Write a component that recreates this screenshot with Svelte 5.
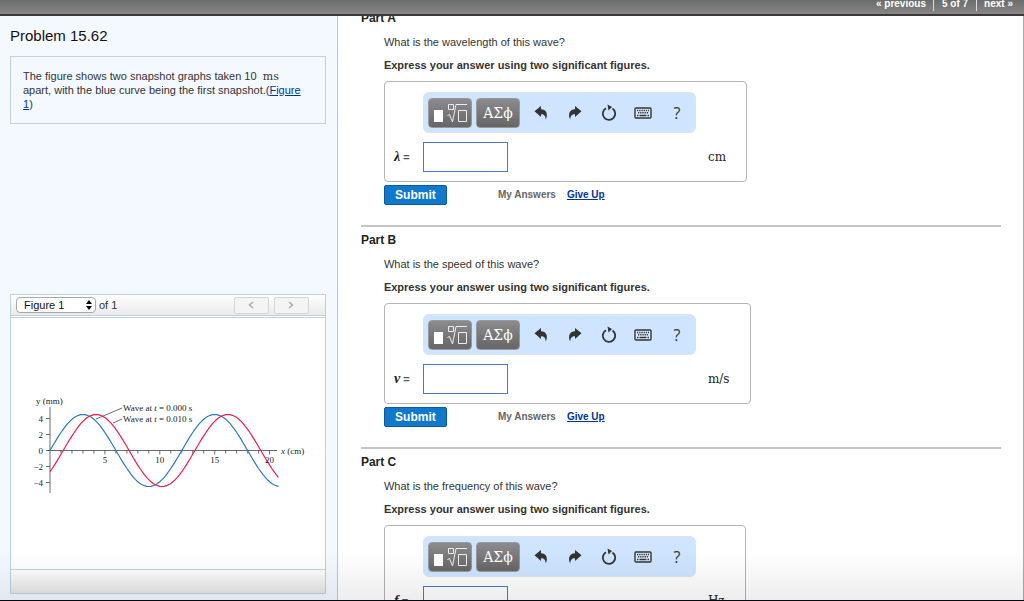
<script>
	const parts = [
		{ id: 'A', question: 'What is the wavelength of this wave?', symbol: 'λ', unit: 'cm' },
		{ id: 'B', question: 'What is the speed of this wave?', symbol: 'v', unit: 'm/s' },
		{ id: 'C', question: 'What is the frequency of this wave?', symbol: 'f', unit: 'Hz' }
	];

	let answers = $state({ A: '', B: '', C: '' });
	let figure = $state('Figure 1');

	// plot geometry: origin and pixels per unit
	const originX = 30;
	const originY = 66.5;
	const unitX = 10.98;
	const unitY = 8;
	const xTicks = Array.from({ length: 20 }, (_, i) => i + 1);
	const xLabels = [5, 10, 15, 20];
	const yTicks = [4, 2, 0, -2, -4];

	const wave = (shift) => {
		let d = '';
		for (let x = 0; x <= 20.8; x += 0.2) {
			const y = 4.5 * Math.sin((2 * Math.PI * (x - shift)) / 12);
			d += `${d ? 'L' : 'M'}${(originX + x * unitX).toFixed(1)} ${(originY - y * unitY).toFixed(1)}`;
		}
		return d;
	};
</script>

<div class="page">
	<header>
		<nav>
			<a href="#previous">« previous</a>
			<span>5 of 7</span>
			<a href="#next">next »</a>
		</nav>
	</header>

	<div class="columns">
		<aside>
			<h1>Problem 15.62</h1>
			<p class="intro">
				The figure shows two snapshot graphs taken 10&nbsp; <span class="math">ms</span> apart, with the blue curve being the
				first snapshot.(<a href="#figure">Figure 1</a>)
			</p>

			<section class="viewer" id="figure">
				<div class="viewer-bar">
					<div class="picker">
						<select bind:value={figure} aria-label="Figure">
							<option>Figure 1</option>
						</select>
						<svg width="6" height="10" viewBox="0 0 6 10"><path d="M3 0L6 4H0ZM3 10L0 6H6Z" /></svg>
					</div>
					<span class="count">of 1</span>
					<button class="step" disabled aria-label="Previous figure">
						<svg width="6" height="8" viewBox="0 0 6 8"><path d="M5 1L1.5 4L5 7" /></svg>
					</button>
					<button class="step" disabled aria-label="Next figure">
						<svg width="6" height="8" viewBox="0 0 6 8"><path d="M1 1L4.5 4L1 7" /></svg>
					</button>
				</div>
				<div class="viewer-body">
					<svg class="plot" viewBox="0 0 300 125" role="img" aria-label="Snapshot graphs of the wave">
						<g class="axis">
							<path d="M30 23V109M28 66.5H257" />
							{#each xTicks as x}
								<path d="M{originX + x * unitX} {originY}v{x % 5 ? 3 : 4}" />
							{/each}
							{#each yTicks as y}
								<path d="M26 {originY - y * unitY}h4" />
							{/each}
							<path d="M102 24L76 35M102 35L93 39" />
						</g>
						<path class="blue" d={wave(0)} />
						<path class="red" d={wave(1.2)} />
						<text x="16" y="20">y (mm)</text>
						<text x="261" y="70"><tspan class="it">x</tspan> (cm)</text>
						<text x="103" y="27">Wave at <tspan class="it">t</tspan> = 0.000 s</text>
						<text x="103" y="38">Wave at <tspan class="it">t</tspan> = 0.010 s</text>
						{#each xLabels as x}
							<text x={originX + x * unitX} y="79" text-anchor="middle">{x}</text>
						{/each}
						{#each yTicks as y}
							<text x="23" y={originY - y * unitY + 3} text-anchor="end">{y < 0 ? '−' + -y : y}</text>
						{/each}
					</svg>
				</div>
				<div class="viewer-foot"></div>
			</section>
		</aside>

		<main>
			<div class="parts">
				{#each parts as part}
					<section class="part">
						<h2>Part {part.id}</h2>
						<div class="content">
							<p>{part.question}</p>
							<p class="hint">Express your answer using two significant figures.</p>

							<div class="answer">
								<div class="toolbar">
									<button class="key" aria-label="Templates">
										<svg width="36" height="24" viewBox="0 0 36 24">
											<rect x="2" y="9" width="9" height="12" fill="#fff" />
											<path d="M16.5 3.500h5v5h-5zM15.500 14.500l2-1 3 7.500 3.500-17.500h11M26.500 9.500h8v11h-8z" fill="none" stroke="#eee" />
										</svg>
									</button>
									<button class="key">ΑΣϕ</button>
									<button class="tool" aria-label="Undo">
										<svg width="16" height="16" viewBox="0 0 16 16"><path d="M1.500 6.300L8 1V4.200C13 4.200 15.500 8.500 12.800 14.500C12.500 10.800 11.200 9.200 8 9.200V12Z" /></svg>
									</button>
									<button class="tool" aria-label="Redo">
										<svg width="16" height="16" viewBox="0 0 16 16"><path d="M14.500 6.300L8 1V4.200C3 4.200 .5 8.500 3.200 14.500C3.500 10.800 4.800 9.200 8 9.200V12Z" /></svg>
									</button>
									<button class="tool" aria-label="Reset">
										<svg width="16" height="18" viewBox="0 0 16 18">
											<path d="M5 4.200A6.200 6.200 0 1 0 11.500 4.500" fill="none" stroke="#333" stroke-width="1.800" />
											<path d="M6.500 .5L11 3L7.500 6.500Z" />
										</svg>
									</button>
									<button class="tool" aria-label="Keyboard">
										<svg width="18" height="12" viewBox="0 0 18 12">
											<rect x="1" y="1" width="16" height="10" rx="1" fill="#dcecff" stroke="#333" stroke-width="1.400" />
											<path d="M3 3.500h12M4 5.700h11" stroke="#333" stroke-width="1.400" stroke-dasharray="1.300 .9" />
											<path d="M3 8.500h1.500M5.500 8.500h7M13.500 8.500h1.500" stroke="#333" stroke-width="1.400" />
										</svg>
									</button>
									<button class="tool">?</button>
								</div>
								<label for="answer-{part.id}"><span class="symbol">{part.symbol}</span> =</label>
								<input id="answer-{part.id}" type="text" bind:value={answers[part.id]} />
								<span class="unit">{part.unit}</span>
							</div>

							<div class="actions">
								<button class="submit">Submit</button>
								<span class="my-answers">My Answers</span>
								<a href="#give-up">Give Up</a>
							</div>
						</div>
					</section>
				{/each}
			</div>
		</main>
	</div>
</div>

<style>
	:global(body) {
		margin: 0;
		background: #fff;
	}

	.page {
		position: relative;
		display: flex;
		flex-direction: column;
		box-sizing: border-box;
		height: 100vh;
		overflow: hidden;
		border-bottom: 1px solid #080812;
		font-family: "Liberation Sans", Arial, sans-serif;
		font-size: 11px;
		line-height: 14px;
		color: #333;
	}

	/* soft shade above the bottom edge of the window */
	.page::after {
		content: "";
		position: absolute;
		right: 0;
		bottom: 0;
		left: 0;
		height: 50px;
		background: linear-gradient(rgba(0, 0, 20, 0), rgba(0, 0, 20, 0.07));
		pointer-events: none;
	}

	h1, h2, p {
		margin: 0;
	}

	a {
		color: #003399;
	}

	button {
		padding: 0;
		font-family: inherit;
	}

	header {
		flex: none;
		box-sizing: border-box;
		height: 16px;
		overflow: hidden;
		border-bottom: 2px solid #3d3838;
		background: linear-gradient(#6b6d6b, #868686);
	}

	nav {
		display: flex;
		justify-content: flex-end;
		margin-top: -3px;
		padding-right: 11px;
		font-size: 10px;
		font-weight: bold;
		color: #fff;
	}

	nav a {
		color: #fff;
		text-decoration: none;
	}

	nav span {
		margin: 0 7px;
		padding: 0 8px;
		border-right: 1px solid #ddd;
		border-left: 1px solid #ddd;
	}

	.columns {
		display: flex;
		flex: 1;
		min-height: 0;
	}

	aside {
		display: flex;
		flex: 0 0 33%;
		flex-direction: column;
		box-sizing: border-box;
		padding: 11px 11px 6px 10px;
		border-right: 1px solid #b8c8dc;
		background: #f4f9ff;
	}

	h1 {
		font-size: 15px;
		font-weight: normal;
		line-height: 18px;
		color: #111;
	}

	.intro {
		margin-top: 11px;
		padding: 12px 18px 12px 12px;
		border: 1px solid #bdd0e4;
	}

	.math {
		font-family: "DejaVu Serif", serif;
		line-height: 1;
	}

	.viewer {
		margin-top: auto;
		border: 1px solid #bdd0e0;
		background: #fff;
	}

	.viewer-bar {
		display: flex;
		align-items: center;
		height: 20px;
		padding-right: 16px;
		padding-left: 5px;
		border-bottom: 1px solid #bdd0e0;
		background: linear-gradient(#fff, #eaeaea);
	}

	.picker {
		position: relative;
		display: flex;
	}

	.picker svg {
		position: absolute;
		top: 3px;
		right: 4px;
		pointer-events: none;
	}

	select {
		width: 80px;
		height: 16px;
		padding: 0 7px;
		appearance: none;
		border: 1px solid #a8a8a8;
		border-radius: 4px;
		background: #fff;
		color: #111;
		font: 11px/14px "Liberation Sans", Arial, sans-serif;
	}

	.count {
		margin-right: auto;
		margin-left: 3px;
	}

	.step {
		display: flex;
		align-items: center;
		justify-content: center;
		width: 35px;
		height: 17px;
		margin-left: 5px;
		border: 1px solid #d4d4d4;
		border-radius: 2px;
		background: #f4f4f4;
	}

	.step path {
		fill: none;
		stroke: #aaa;
		stroke-width: 1.5;
	}

	.viewer-body {
		height: 251px;
		border-top: 1px solid #bdd0e0;
		border-bottom: 1px solid #bdd0e0;
		margin-top: 1px;
	}

	.plot {
		display: block;
		width: 300px;
		height: 125px;
		margin: 66px 0 0 9px;
		font-family: "Liberation Serif", "Times New Roman", serif;
		font-size: 9px;
		fill: #222;
	}

	.axis path {
		stroke: #444;
		stroke-width: 0.8;
	}

	.it {
		font-style: italic;
	}

	.blue, .red {
		fill: none;
		stroke: #2a7ab8;
		stroke-width: 1.2;
	}

	.red {
		stroke: #ee1c4e;
	}

	.viewer-foot {
		height: 23px;
		background: linear-gradient(#fff, #e6e6e6);
	}

	main {
		flex: 1;
		min-width: 0;
		overflow: hidden;
		padding: 0 22px 0 23px;
		border-right: 1px solid #aaa;
	}

	/* the list is scrolled so that Part A starts just under the header */
	.parts {
		margin-top: -13px;
	}

	.part {
		padding: 5px 0 20px;
		border-top: 2px solid #c4c4c4;
	}

	h2 {
		font-size: 12px;
		line-height: 16px;
		color: #222;
	}

	.content {
		padding-left: 23px;
	}

	.content p {
		margin-top: 9px;
	}

	.hint {
		font-weight: bold;
	}

	.answer {
		display: inline-grid;
		grid-template-columns: 29px 285px auto;
		grid-template-rows: 41px 30px;
		row-gap: 9px;
		align-items: center;
		margin-top: 9px;
		padding: 10px 20px 9px 9px;
		border: 1px solid #b4b4b4;
		border-radius: 4px;
	}

	.toolbar {
		display: flex;
		grid-column: 2;
		align-items: center;
		box-sizing: border-box;
		width: 273px;
		height: 41px;
		padding-left: 4px;
		border: 1px solid #dde3ea;
		border-radius: 6px;
		background: #cfe5ff;
	}

	.key {
		display: flex;
		align-items: center;
		justify-content: center;
		width: 44px;
		height: 30px;
		margin-right: 4px;
		border: 1px solid #999;
		border-radius: 4px;
		background: linear-gradient(#8b8b8e, #666);
		color: #fff;
		font-family: "DejaVu Serif", serif;
		font-size: 14px;
	}

	.tool {
		display: flex;
		align-items: center;
		justify-content: center;
		width: 34px;
		height: 30px;
		border: 0;
		background: none;
		color: #333;
		font-family: "Open Sans", sans-serif;
		font-size: 16px;
	}

	.tool svg {
		fill: #333;
	}

	label {
		grid-column: 1;
		white-space: nowrap;
		font-weight: bold;
		color: #555;
	}

	.symbol, .unit {
		color: #222;
		font-family: "DejaVu Serif", serif;
		font-size: 12px;
		font-weight: normal;
	}

	.symbol {
		font-family: "Liberation Serif", serif;
		font-size: 14px;
		font-style: italic;
		font-weight: bold;
	}

	input {
		box-sizing: border-box;
		width: 85px;
		height: 30px;
		border: 1px solid #4a76d0;
		background: #fff;
	}

	.actions {
		display: flex;
		align-items: center;
		margin-top: 3px;
		font-size: 10px;
		font-weight: bold;
	}

	.submit {
		width: 63px;
		height: 20px;
		border: 1px solid #0a5a9c;
		border-radius: 2px;
		background: #1079cb;
		color: #fff;
		font-size: 12px;
		font-weight: bold;
	}

	.my-answers {
		margin: 0 11px 0 51px;
		color: #666;
	}
</style>
